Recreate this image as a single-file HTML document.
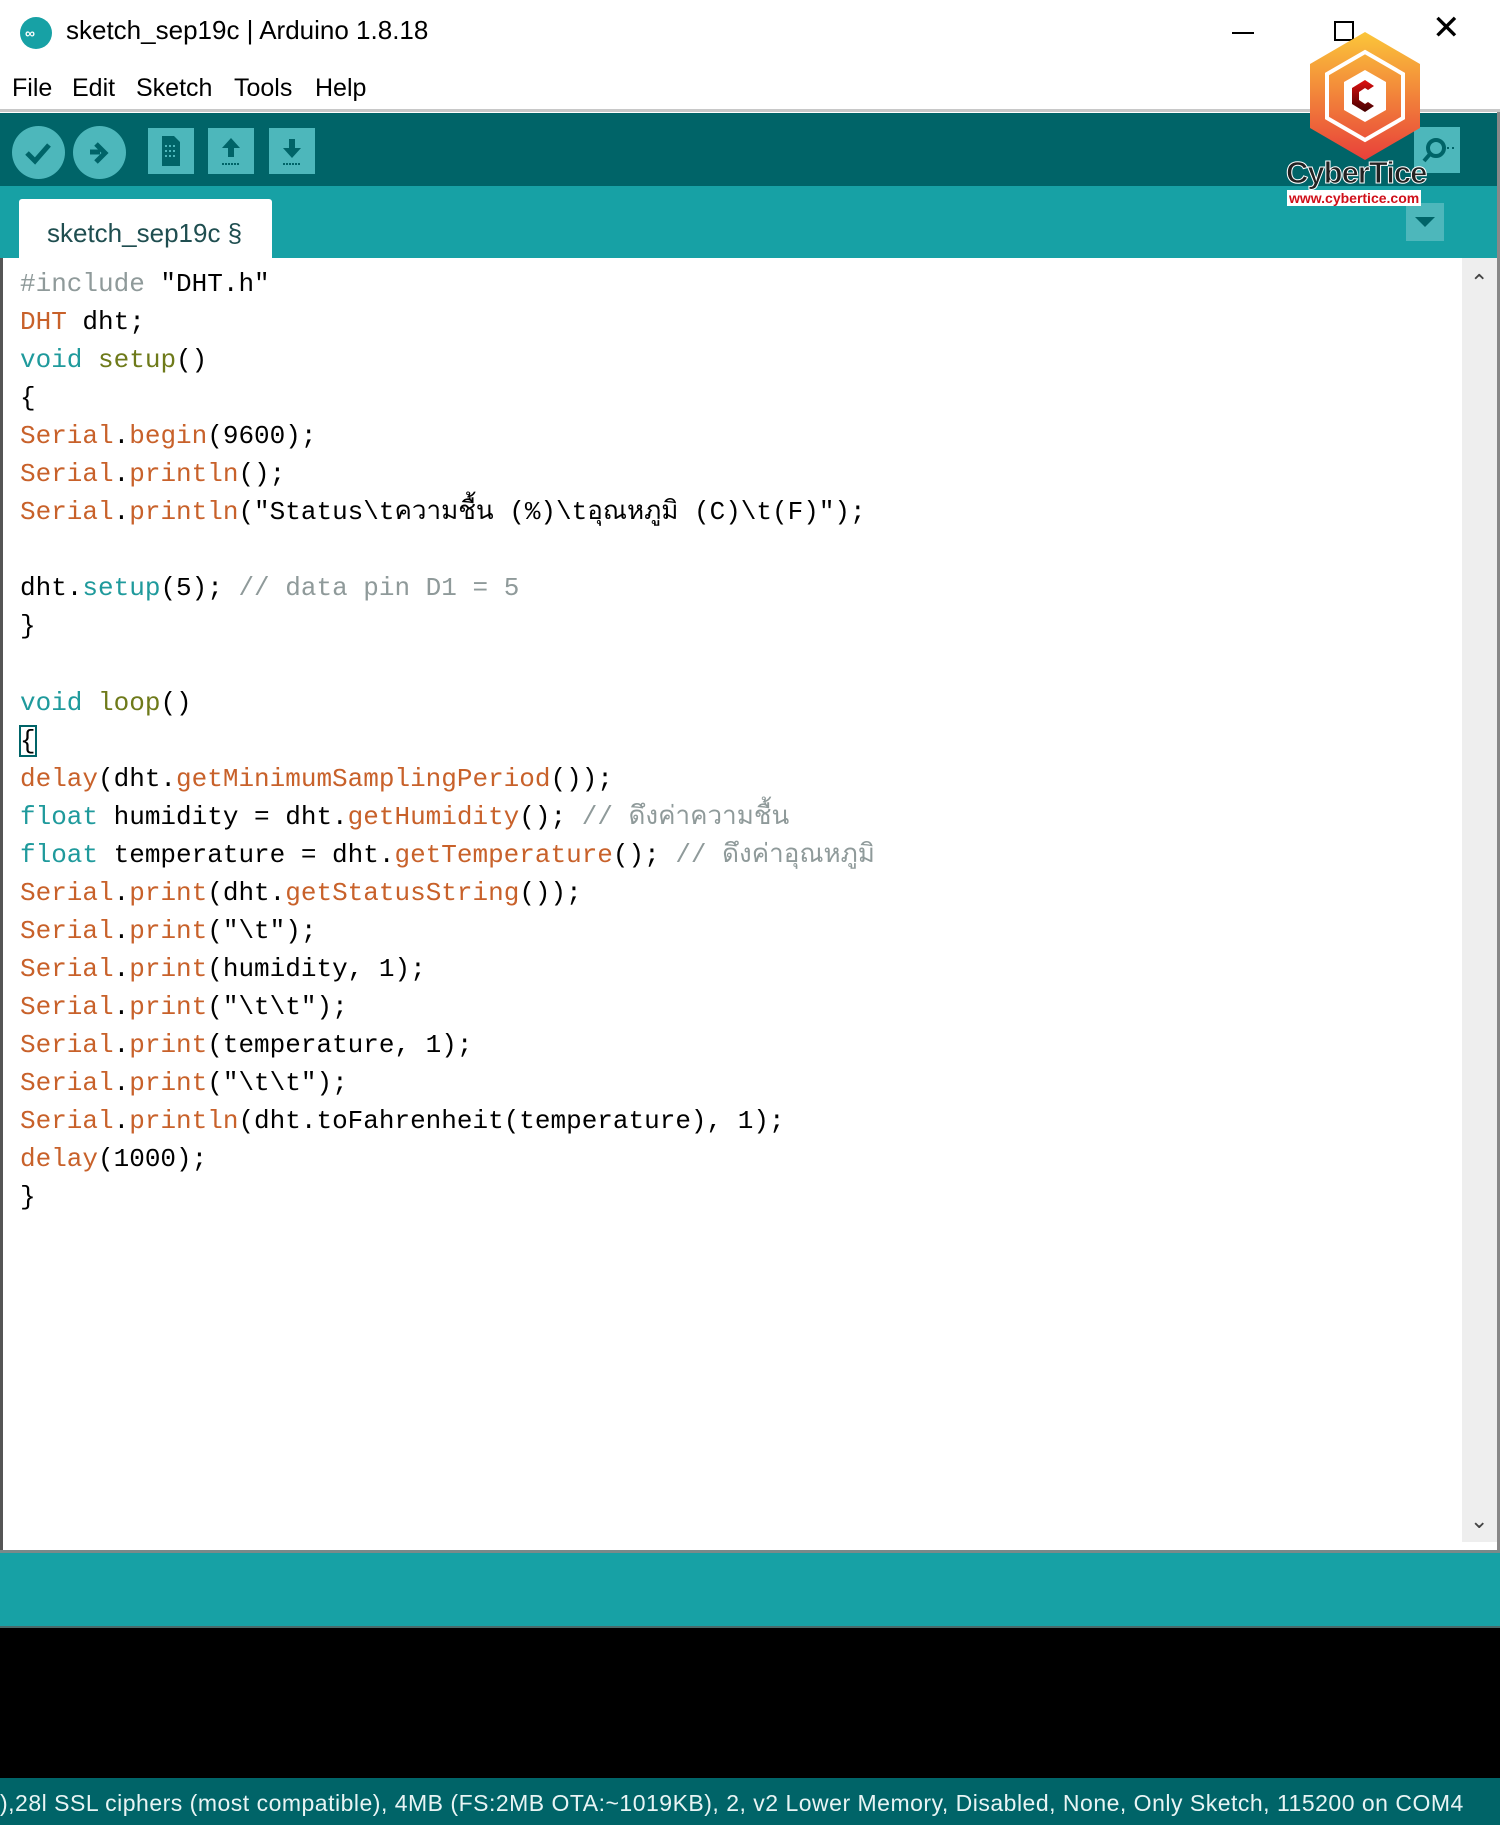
<!DOCTYPE html>
<html><head><meta charset="utf-8">
<style>
*{margin:0;padding:0;box-sizing:border-box}
html,body{width:1500px;height:1825px;overflow:hidden;background:#fff;font-family:"Liberation Sans","Noto Sans CJK SC",sans-serif}
.abs{position:absolute}
#title{left:0;top:0;width:1500px;height:64px;background:#fff}
#menu{left:0;top:64px;width:1500px;height:48px;background:#fff;border-bottom:3px solid #c8c8c8}
#menu span{position:absolute;top:10px;font-size:25px;color:#000}
#toolbar{left:0;top:113px;width:1500px;height:73px;background:#006468}
#tabbar{left:0;top:186px;width:1500px;height:72px;background:#17a1a5}
#editor{left:0;top:258px;width:1497px;height:1290px;background:#fff}
#status{left:0;top:1550px;width:1500px;height:76px;background:#17a1a5;border-top:3px solid #7a8a8a}
#console{left:0;top:1626px;width:1500px;height:152px;background:#000;border-top:2px solid #4a6a6a}
#bottom{left:0;top:1778px;width:1500px;height:47px;background:#006468;color:#e8f4f4;font-size:23px;line-height:50px;white-space:nowrap;overflow:hidden;letter-spacing:0.5px}
.btnc{width:53px;height:53px;border-radius:50%;background:#4db7bb;top:126px}
.btns{width:46px;height:46px;background:#4db7bb;top:128px}
.code{left:20px;top:265px;font-family:"Liberation Mono","Noto Sans CJK SC",monospace;font-size:26px;line-height:38.04px;color:#000;white-space:pre}
.o{color:#c8612a}.t{color:#1f9a9c}.g{color:#8f9a9a}.v{color:#6e7a1a}
</style></head><body>
<div id="title" class="abs">
 <div class="abs" style="left:20px;top:17px;width:32px;height:32px;border-radius:50%;background:#17a1a5"></div>
 <div class="abs" style="left:25px;top:25px;color:#fff;font-size:14px;font-weight:bold">∞</div>
 <div class="abs" style="left:66px;top:15px;font-size:26px;color:#000">sketch_sep19c | Arduino 1.8.18</div>
 <div class="abs" style="left:1232px;top:32px;width:22px;height:2px;background:#000"></div>
 <div class="abs" style="left:1334px;top:21px;width:20px;height:20px;border:2px solid #000"></div>
 <div class="abs" style="left:1432px;top:8px;font-size:34px;color:#000">✕</div>
</div>
<div id="menu" class="abs">
 <span style="left:12px">File</span><span style="left:72px">Edit</span><span style="left:136px">Sketch</span><span style="left:234px">Tools</span><span style="left:315px">Help</span>
</div>
<div id="toolbar" class="abs"></div>
<div class="abs btnc" style="left:12px"></div>
<div class="abs btnc" style="left:73px"></div>
<svg class="abs" style="left:12px;top:126px" width="120" height="53">
 <path d="M15 27 L23 35 L37 19" stroke="#006468" stroke-width="5" fill="none"/>
 <path d="M78 26 h10 M84 18 l9 9 l-9 9" stroke="#006468" stroke-width="5" fill="none"/>
</svg>
<div class="abs btns" style="left:148px"></div>
<div class="abs btns" style="left:208px"></div>
<div class="abs btns" style="left:269px"></div>
<svg class="abs" style="left:148px;top:128px" width="170" height="46">
 <path d="M14 8 h12 l6 6 v24 h-18z" fill="#006468"/>
 <g fill="#4db7bb"><rect x="17" y="17" width="2" height="2"/><rect x="21" y="17" width="2" height="2"/><rect x="25" y="17" width="2" height="2"/><rect x="17" y="22" width="2" height="2"/><rect x="21" y="22" width="2" height="2"/><rect x="25" y="22" width="2" height="2"/><rect x="17" y="27" width="2" height="2"/><rect x="21" y="27" width="2" height="2"/><rect x="25" y="27" width="2" height="2"/></g>
 <path d="M83 10 l-9 10 h6 v9 h6 v-9 h6z" fill="#006468"/>
 <path d="M74 36 h18" stroke="#006468" stroke-width="2" stroke-dasharray="2 1"/>
 <path d="M144 30 l-9 -10 h6 v-9 h6 v9 h6z" fill="#006468"/>
 <path d="M135 36 h18" stroke="#006468" stroke-width="2" stroke-dasharray="2 1"/>
</svg>
<div class="abs" style="left:1414px;top:127px;width:46px;height:46px;background:#4db7bb"></div>
<svg class="abs" style="left:1414px;top:127px" width="46" height="46">
 <circle cx="22" cy="21" r="8" fill="none" stroke="#006468" stroke-width="4"/>
 <path d="M16 27 l-6 7" stroke="#006468" stroke-width="4"/>
 <path d="M33 21 h2 M38 21 h2" stroke="#006468" stroke-width="2"/>
</svg>
<div id="tabbar" class="abs"></div>
<div class="abs" style="left:19px;top:199px;width:253px;height:60px;background:#fff;border-radius:3px 3px 0 0"></div>
<div class="abs" style="left:47px;top:218px;font-size:26px;color:#1f4e50">sketch_sep19c §</div>
<div class="abs" style="left:1406px;top:203px;width:38px;height:38px;background:#4db7bb"></div>
<div class="abs" style="left:1415px;top:217px;width:0;height:0;border-left:10px solid transparent;border-right:10px solid transparent;border-top:10px solid #006468"></div>
<svg class="abs" style="left:1300px;top:30px" width="130" height="132">
 <defs><linearGradient id="lg" x1="0" y1="0" x2="0" y2="1"><stop offset="0" stop-color="#fbc63a"/><stop offset="1" stop-color="#e8403a"/></linearGradient>
 <linearGradient id="cg" x1="0" y1="0" x2="0" y2="1"><stop offset="0" stop-color="#e01010"/><stop offset="1" stop-color="#400"/></linearGradient></defs>
 <path d="M65 2 L120 34 L120 98 L65 130 L10 98 L10 34Z" fill="url(#lg)"/>
 <path d="M65 22 L103 44 L103 88 L65 110 L27 88 L27 44Z" fill="none" stroke="#fff" stroke-width="4"/>
 <path d="M65 40 L86 52 L86 80 L65 92 L44 80 L44 52Z" fill="#fff"/>
 <path d="M74 56 L65 50 L52 58 L52 74 L65 82 L74 76 L68 72 L65 74 L59 70 L59 62 L65 58 L68 60Z" fill="url(#cg)"/>
</svg>
<div class="abs" style="left:1286px;top:155px;font-size:31px;font-weight:bold;color:#222;letter-spacing:-1px;-webkit-text-stroke:1px #fff">CyberTice</div>
<div class="abs" style="left:1287px;top:190px;font-size:14px;font-weight:bold;color:#d0101a;background:#fff;padding:0 2px">www.cybertice.com</div>
<div id="editor" class="abs"></div>
<div class="abs" style="left:0;top:258px;width:3px;height:1292px;background:#555"></div>
<div class="abs" style="left:1462px;top:258px;width:35px;height:1284px;background:#eeeeee"></div>
<div class="abs" style="left:1470px;top:270px;font-size:22px;color:#444">⌃</div>
<div class="abs" style="left:1470px;top:1508px;font-size:22px;color:#444">⌄</div>
<div class="abs" style="left:1497px;top:112px;width:3px;height:1440px;background:#888"></div>
<div class="abs code"><span class="g">#include</span> "DHT.h"
<span class="o">DHT</span> dht;
<span class="t">void</span> <span class="v">setup</span>()
{
<span class="o">Serial</span>.<span class="o">begin</span>(9600);
<span class="o">Serial</span>.<span class="o">println</span>();
<span class="o">Serial</span>.<span class="o">println</span>("Status\tความชื้น (%)\tอุณหภูมิ (C)\t(F)");

dht.<span class="t">setup</span>(5); <span class="g">// data pin D1 = 5</span>
}

<span class="t">void</span> <span class="v">loop</span>()
<span style="outline:2px solid #006468;outline-offset:-1px">{</span>
<span class="o">delay</span>(dht.<span class="o">getMinimumSamplingPeriod</span>());
<span class="t">float</span> humidity = dht.<span class="o">getHumidity</span>(); <span class="g">// ดึงค่าความชื้น</span>
<span class="t">float</span> temperature = dht.<span class="o">getTemperature</span>(); <span class="g">// ดึงค่าอุณหภูมิ</span>
<span class="o">Serial</span>.<span class="o">print</span>(dht.<span class="o">getStatusString</span>());
<span class="o">Serial</span>.<span class="o">print</span>("\t");
<span class="o">Serial</span>.<span class="o">print</span>(humidity, 1);
<span class="o">Serial</span>.<span class="o">print</span>("\t\t");
<span class="o">Serial</span>.<span class="o">print</span>(temperature, 1);
<span class="o">Serial</span>.<span class="o">print</span>("\t\t");
<span class="o">Serial</span>.<span class="o">println</span>(dht.toFahrenheit(temperature), 1);
<span class="o">delay</span>(1000);
}</div>
<div id="status" class="abs"></div>
<div id="console" class="abs"></div>
<div id="bottom" class="abs">),28l SSL ciphers (most compatible), 4MB (FS:2MB OTA:~1019KB), 2, v2 Lower Memory, Disabled, None, Only Sketch, 115200 on COM4</div>
</body></html>
